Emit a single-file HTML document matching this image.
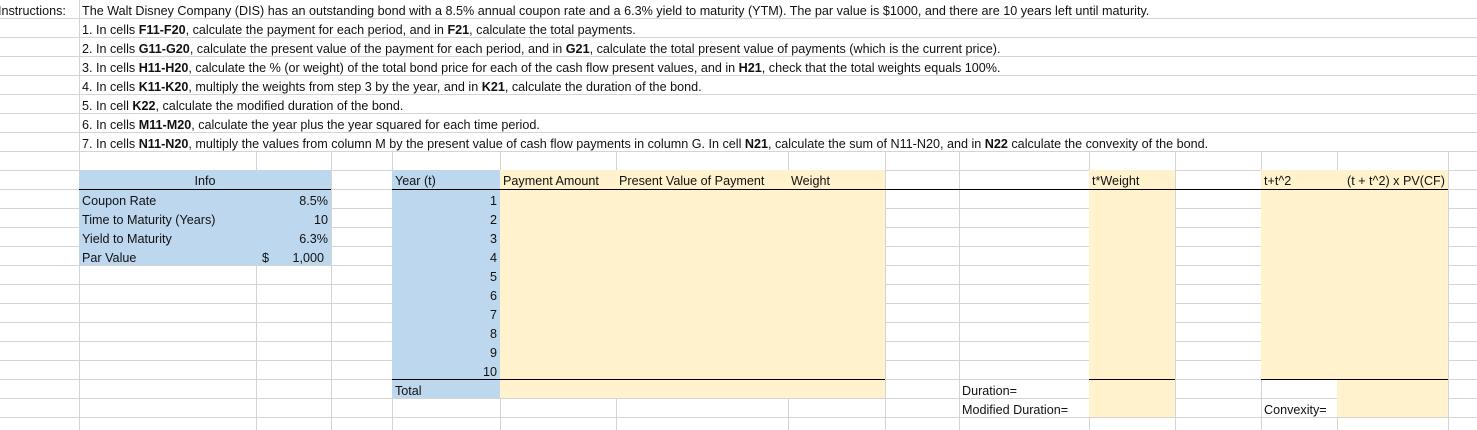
<!DOCTYPE html>
<html><head><meta charset="utf-8"><style>
html,body{margin:0;padding:0;background:#fff;width:1477px;height:430px;overflow:hidden;position:relative;font-family:"Liberation Sans",Arial,sans-serif;font-size:12.6px;color:#111}
.a{position:absolute}
.g{position:absolute;left:0;top:0;width:1477px;height:430px;background:repeating-linear-gradient(to bottom,transparent 0,transparent 18px,#d4d4d4 18px,#d4d4d4 19px)}
.v{position:absolute;width:1px;background:#d4d4d4}
.t{position:absolute;height:19px;line-height:22px;white-space:nowrap}
.r{text-align:right}
.k{position:absolute;height:1px;background:#000}
b{font-weight:bold}
</style></head><body>
<div class="g"></div>
<div class="v" style="left:79px;top:0;height:430px"></div>
<div class="v" style="left:256px;top:151px;height:279px"></div>
<div class="v" style="left:331px;top:151px;height:279px"></div>
<div class="v" style="left:392px;top:151px;height:279px"></div>
<div class="v" style="left:500px;top:151px;height:279px"></div>
<div class="v" style="left:616px;top:151px;height:279px"></div>
<div class="v" style="left:788px;top:151px;height:279px"></div>
<div class="v" style="left:885px;top:151px;height:279px"></div>
<div class="v" style="left:959px;top:151px;height:279px"></div>
<div class="v" style="left:1089px;top:151px;height:279px"></div>
<div class="v" style="left:1175px;top:151px;height:279px"></div>
<div class="v" style="left:1261px;top:151px;height:279px"></div>
<div class="v" style="left:1337px;top:151px;height:279px"></div>
<div class="v" style="left:1448px;top:151px;height:279px"></div>
<div class="a" style="left:79px;top:170px;width:252px;height:95px;background:#bdd7ee"></div>
<div class="a" style="left:392px;top:170px;width:108px;height:228px;background:#bdd7ee"></div>
<div class="a" style="left:500px;top:170px;width:385px;height:228px;background:#fff2cc"></div>
<div class="a" style="left:1089px;top:170px;width:86px;height:247px;background:#fff2cc"></div>
<div class="a" style="left:1261px;top:170px;width:187px;height:209px;background:#fff2cc"></div>
<div class="a" style="left:1337px;top:379px;width:111px;height:38px;background:#fff2cc"></div>
<div class="k" style="left:79px;top:189px;width:252px"></div>
<div class="k" style="left:392px;top:189px;width:1056px"></div>
<div class="k" style="left:392px;top:379px;width:493px"></div>
<div class="k" style="left:1089px;top:379px;width:86px"></div>
<div class="k" style="left:1261px;top:379px;width:187px"></div>
<div class="t" style="left:-2px;top:0">Instructions:</div>
<div class="t" style="left:82px;top:0">The Walt Disney Company (DIS) has an outstanding bond with a 8.5% annual coupon rate and a 6.3% yield to maturity (YTM). The par value is $1000, and there are 10 years left until maturity.</div>
<div class="t" style="left:82px;top:19px">1. In cells <b>F11-F20</b>, calculate the payment for each period, and in <b>F21</b>, calculate the total payments.</div>
<div class="t" style="left:82px;top:38px">2. In cells <b>G11-G20</b>, calculate the present value of the payment for each period, and in <b>G21</b>, calculate the total present value of payments (which is the current price).</div>
<div class="t" style="left:82px;top:57px">3. In cells <b>H11-H20</b>, calculate the % (or weight) of the total bond price for each of the cash flow present values, and in <b>H21</b>, check that the total weights equals 100%.</div>
<div class="t" style="left:82px;top:76px">4. In cells <b>K11-K20</b>, multiply the weights from step 3 by the year, and in <b>K21</b>, calculate the duration of the bond.</div>
<div class="t" style="left:82px;top:95px">5. In cell <b>K22</b>, calculate the modified duration of the bond.</div>
<div class="t" style="left:82px;top:114px">6. In cells <b>M11-M20</b>, calculate the year plus the year squared for each time period.</div>
<div class="t" style="left:82px;top:133px">7. In cells <b>N11-N20</b>, multiply the values from column M by the present value of cash flow payments in column G. In cell <b>N21</b>, calculate the sum of N11-N20, and in <b>N22</b> calculate the convexity of the bond.</div>
<div class="t" style="left:79px;top:170px;width:252px;text-align:center">Info</div>
<div class="t" style="left:82px;top:190px">Coupon Rate</div>
<div class="t" style="left:82px;top:209px">Time to Maturity (Years)</div>
<div class="t" style="left:82px;top:228px">Yield to Maturity</div>
<div class="t" style="left:82px;top:247px">Par Value</div>
<div class="t r" style="left:256px;top:190px;width:72px">8.5%</div>
<div class="t r" style="left:256px;top:209px;width:72px">10</div>
<div class="t r" style="left:256px;top:228px;width:72px">6.3%</div>
<div class="t" style="left:262px;top:247px">$</div>
<div class="t r" style="left:256px;top:247px;width:68px">1,000</div>
<div class="t" style="left:395px;top:170px">Year (t)</div>
<div class="t r" style="left:392px;top:190px;width:105px">1</div>
<div class="t r" style="left:392px;top:209px;width:105px">2</div>
<div class="t r" style="left:392px;top:228px;width:105px">3</div>
<div class="t r" style="left:392px;top:247px;width:105px">4</div>
<div class="t r" style="left:392px;top:266px;width:105px">5</div>
<div class="t r" style="left:392px;top:285px;width:105px">6</div>
<div class="t r" style="left:392px;top:304px;width:105px">7</div>
<div class="t r" style="left:392px;top:323px;width:105px">8</div>
<div class="t r" style="left:392px;top:342px;width:105px">9</div>
<div class="t r" style="left:392px;top:361px;width:105px">10</div>
<div class="t" style="left:395px;top:380px">Total</div>
<div class="t" style="left:503px;top:170px">Payment Amount</div>
<div class="t" style="left:619px;top:170px">Present Value of Payment</div>
<div class="t" style="left:791px;top:170px">Weight</div>
<div class="t" style="left:1092px;top:170px">t*Weight</div>
<div class="t" style="left:1264px;top:170px">t+t^2</div>
<div class="t" style="left:1347px;top:170px">(t + t^2) x PV(CF)</div>
<div class="t" style="left:962px;top:380px">Duration=</div>
<div class="t" style="left:962px;top:399px">Modified Duration=</div>
<div class="t" style="left:1264px;top:399px">Convexity=</div>
</body></html>
